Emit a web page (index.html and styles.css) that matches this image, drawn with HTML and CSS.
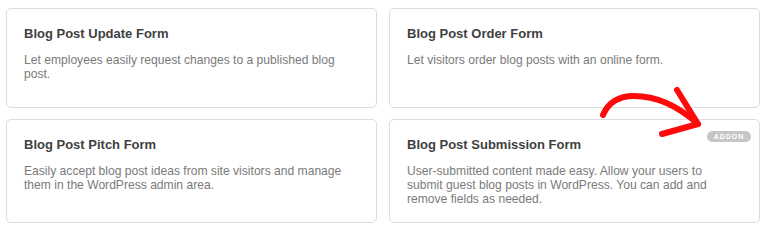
FILE: index.html
```html
<!DOCTYPE html>
<html lang="en">
<head>
<meta charset="utf-8">
<title>Blog Post Forms</title>
<link rel="stylesheet" href="styles.css">
</head>
<body>
<div class="grid">
  <div class="card">
    <h3 class="title">Blog Post Update Form</h3>
    <p class="desc">Let employees easily request changes to a published blog post.</p>
  </div>
  <div class="card">
    <h3 class="title">Blog Post Order Form</h3>
    <p class="desc">Let visitors order blog posts with an online form.</p>
  </div>
  <div class="card">
    <h3 class="title">Blog Post Pitch Form</h3>
    <p class="desc">Easily accept blog post ideas from site visitors and manage them in the WordPress admin area.</p>
  </div>
  <div class="card">
    <span class="badge">ADDON</span>
    <h3 class="title">Blog Post Submission Form</h3>
    <p class="desc">User-submitted content made easy. Allow your users to submit guest blog posts in WordPress. You can add and remove fields as needed.</p>
  </div>
</div>
<svg class="arrow" width="768" height="228" viewBox="0 0 768 228" aria-hidden="true">
  <path d="M603 115 Q611 96 634 96 Q667 96 698 124" />
  <path d="M677 90 L698 124 L662 134" />
</svg>
</body>
</html>
```

FILE: styles.css
```css
html, body {
  margin: 0;
  padding: 0;
  background: #ffffff;
}

body {
  position: relative;
  width: 768px;
  height: 228px;
  overflow: hidden;
  font-family: "Liberation Sans", Arial, sans-serif;
}

.grid {
  display: grid;
  grid-template-columns: 371px 371px;
  grid-template-rows: 100px 104px;
  column-gap: 12px;
  row-gap: 11px;
  padding: 8px 0 0 6px;
}

.card {
  position: relative;
  box-sizing: border-box;
  border: 1px solid #dcdcdc;
  border-radius: 5px;
  padding: 16px 24px 0 17px;
  background: #ffffff;
}

.title {
  margin: 0;
  font-size: 13px;
  line-height: 18px;
  font-weight: bold;
  color: #3f3f3f;
}

.desc {
  margin: 10px 0 0 0;
  font-size: 12.1px;
  line-height: 14px;
  color: #7a7a7a;
}

.badge {
  position: absolute;
  top: 11px;
  right: 8px;
  width: 44px;
  height: 11px;
  border-radius: 6px;
  background: #c6c6c6;
  color: #ffffff;
  font-size: 7px;
  font-weight: bold;
  letter-spacing: 1px;
  line-height: 11px;
  text-align: center;
}

.arrow {
  position: absolute;
  left: 0;
  top: 0;
  pointer-events: none;
}

.arrow path {
  fill: none;
  stroke: #ff0a0a;
  stroke-width: 6;
  stroke-linecap: round;
  stroke-linejoin: round;
}
```
